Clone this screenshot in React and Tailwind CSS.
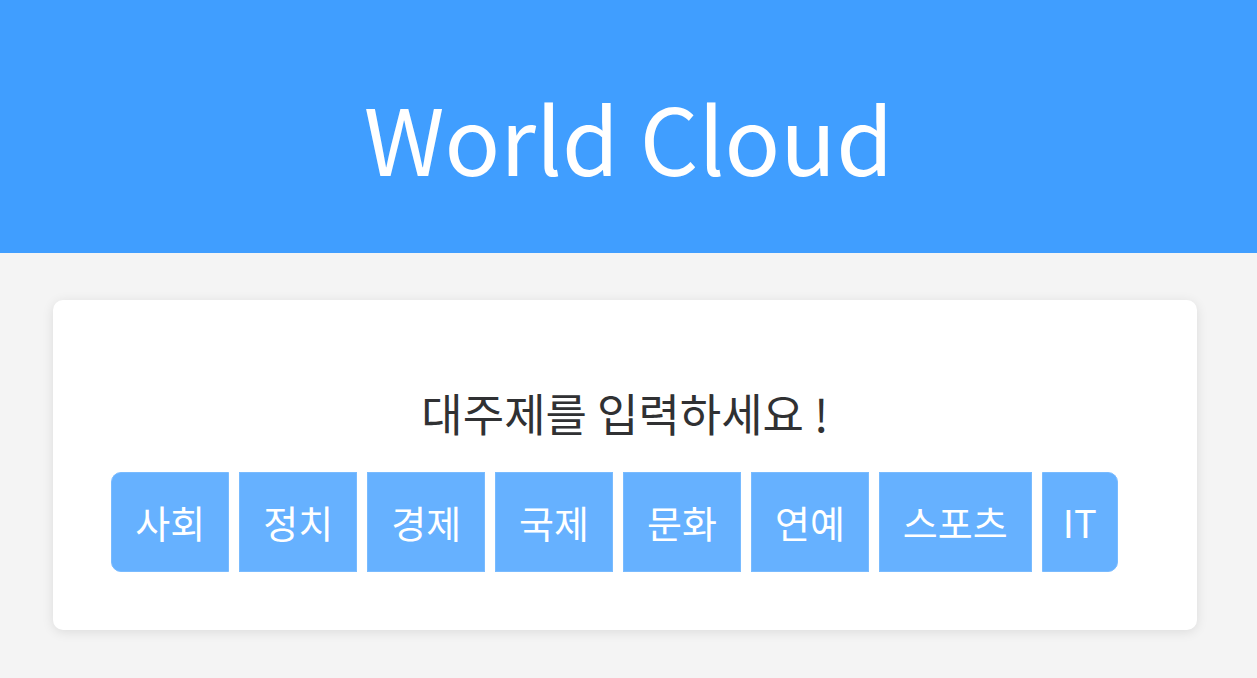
import React, { useState } from "react";

const topics = ["사회", "정치", "경제", "국제", "문화", "연예", "스포츠", "IT"];

function App() {
  const [picked, setPicked] = useState(null);

  return (
    <div
      className="min-h-[678px] bg-[#f4f4f4]"
      style={{ fontFamily: '"Noto Sans CJK KR", "Noto Sans", sans-serif' }}
    >
      <header className="h-[253px] bg-[#409eff] flex items-center justify-center">
        <h1 className="text-white text-[92px] font-normal leading-none pt-[18px]">World Cloud</h1>
      </header>

      <div className="pl-[53px] pr-[60px] pt-[47px]">
        <div className="bg-white rounded-[10px] shadow-[0_2px_12px_rgba(0,0,0,0.1)] h-[330px] flex flex-col items-center pt-[90px]">
          <p className="text-[#303133] text-[45px] leading-none">대주제를 입력하세요 !</p>

          {/* 주제 선택 버튼 */}
          <div className="flex gap-[10px] mt-[37px] pr-[21px]">
            {topics.map((t, i) => (
              <button
                key={t}
                onClick={() => setPicked(t)}
                className={
                  "h-[100px] bg-[#66b1ff] border border-[#79bbff] text-white text-[38px] leading-none " +
                  (t === "IT" ? "px-[20px] " : "px-[23px] ") +
                  (i === 0 ? "rounded-l-[10px] " : "") +
                  (i === topics.length - 1 ? "rounded-r-[10px] " : "") +
                  (picked === t ? "bg-[#409eff]" : "")
                }
              >
                {t}
              </button>
            ))}
          </div>
        </div>
      </div>
    </div>
  );
}

export default App;
